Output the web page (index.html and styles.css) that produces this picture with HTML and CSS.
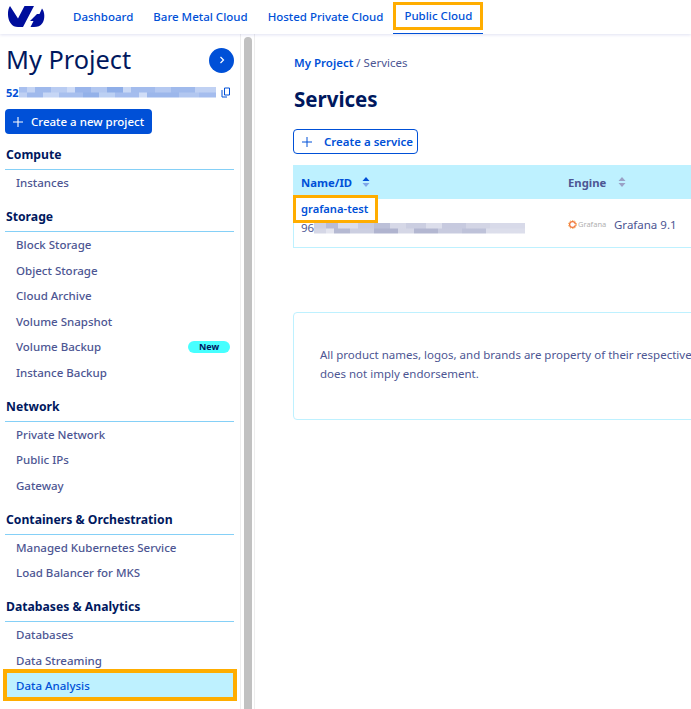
FILE: index.html
```html
<!DOCTYPE html>
<html lang="en">
<head>
<meta charset="utf-8">
<title>Services</title>
<link rel="stylesheet" href="styles.css">
</head>
<body>
<header class="topbar">
  <svg class="logo" width="38" height="24" viewBox="0 0 38 24" aria-label="OVH"><path fill="#000e9c" d="M3 2C0 6 .5 15 3.500 19C5.500 22 8 23 11 23H16L27 2H17.500L11 14.500Z"/><path fill="#000e9c" d="M35 4.500C38 8 38 15.500 35.500 19C33.500 22 30.500 23 27 23H23.500L26.500 17H23L30 10H32.500Z"/></svg>
  <nav class="tabs">
    <a class="tab">Dashboard</a>
    <a class="tab">Bare Metal Cloud</a>
    <a class="tab">Hosted Private Cloud</a>
    <a class="tab tab-active"><span class="tab-mark">Public Cloud</span></a>
  </nav>
</header>
<div class="shell">
  <aside class="sidebar">
    <div class="project-row">
      <h2 class="project-title">My Project</h2>
      <span class="round-btn"><svg width="8" height="10" viewBox="0 0 8 10"><path d="M2.500 2L5.500 5L2.500 8" fill="none" stroke="#fff" stroke-width="1.200"/></svg></span>
    </div>
    <div class="id-row">
      <span class="id-prefix">52</span><span class="blur blur-blue"></span>
      <svg class="copy" width="10" height="11" viewBox="0 0 10 11"><path d="M3.500 1H8.500V8H3.500Z M1 3V10H6" fill="none" stroke="#0050d7" stroke-width="1"/></svg>
    </div>
    <a class="primary-btn"><svg width="12" height="12" viewBox="0 0 12 12"><path d="M6 1V11M1 6H11" stroke="#fff" stroke-width="1.100"/></svg><span>Create a new project</span></a>

    <section class="group group-first">
      <h3 class="group-title">Compute</h3>
      <a class="item">Instances</a>
    </section>
    <section class="group">
      <h3 class="group-title">Storage</h3>
      <a class="item">Block Storage</a>
      <a class="item">Object Storage</a>
      <a class="item">Cloud Archive</a>
      <a class="item">Volume Snapshot</a>
      <a class="item">Volume Backup<span class="badge">New</span></a>
      <a class="item">Instance Backup</a>
    </section>
    <section class="group">
      <h3 class="group-title">Network</h3>
      <a class="item">Private Network</a>
      <a class="item">Public IPs</a>
      <a class="item">Gateway</a>
    </section>
    <section class="group">
      <h3 class="group-title">Containers &amp; Orchestration</h3>
      <a class="item">Managed Kubernetes Service</a>
      <a class="item">Load Balancer for MKS</a>
    </section>
    <section class="group">
      <h3 class="group-title">Databases &amp; Analytics</h3>
      <a class="item">Databases</a>
      <a class="item">Data Streaming</a>
      <a class="item item-active">Data Analysis</a>
    </section>
  </aside>
  <div class="scrolltrack"><div class="scrollthumb"></div></div>
  <main class="content">
    <div class="crumbs"><a class="crumb-link">My Project</a> / Services</div>
    <h1 class="page-title">Services</h1>
    <a class="outline-btn"><svg width="12" height="12" viewBox="0 0 12 12"><path d="M6 1V11M1 6H11" stroke="#0050d7" stroke-width="1"/></svg><span>Create a service</span></a>
    <div class="table">
      <div class="thead">
        <div class="cell-name th th-sorted">Name/ID<svg class="sort" width="8" height="10" viewBox="0 0 8 10"><path d="M4 0L7.500 4H.5Z" fill="#0050d7"/><path d="M4 10L7.500 6H.5Z" fill="#7ea6e8"/></svg></div>
        <div class="cell-engine th">Engine<svg class="sort" width="8" height="10" viewBox="0 0 8 10"><path d="M4 0L7.500 4H.5Z" fill="#9aa1c6"/><path d="M4 10L7.500 6H.5Z" fill="#9aa1c6"/></svg></div>
      </div>
      <div class="tbody">
        <div class="cell-name">
          <a class="service-name"><span class="service-mark">grafana-test</span></a>
          <div class="service-id">96<span class="blur blur-grey"></span></div>
        </div>
        <div class="cell-engine engine-value">
          <span class="grafana-logo"><svg width="9" height="9" viewBox="0 0 10 10"><circle cx="5" cy="5" r="3.200" fill="none" stroke="#f0713a" stroke-width="1.400"/><circle cx="5" cy="5" r="4.400" fill="none" stroke="#f5a13c" stroke-width="1.100" stroke-dasharray="1.500 1.300"/><path d="M5 5.200H8.500" stroke="#fff" stroke-width="1"/></svg><span class="grafana-word">Grafana</span></span>
          <span>Grafana 9.1</span>
        </div>
      </div>
    </div>
    <div class="notice">
      <p class="notice-text">All product names, logos, and brands are property of their respective owners. Use of these names<br>does not imply endorsement.</p>
    </div>
  </main>
</div>
</body>
</html>
```
FILE: styles.css
```css
* { box-sizing: border-box; }
html, body { margin: 0; height: 100%; overflow: hidden; background: #fff; }
body { font-family: "Noto Sans", "Liberation Sans", sans-serif; font-size: 11.500px; color: #4d5693; width: 691px; height: 709px; }
a { text-decoration: none; }
h1, h2, h3, p { margin: 0; }

.topbar { height: 34px; display: flex; align-items: flex-start; box-shadow: 0 1px 3px rgba(0, 14, 156, .12); position: relative; z-index: 2; background: #fff; }
.logo { margin: 4px 0 0 7px; flex: none; }
.tabs { display: flex; margin-left: 18px; }
.tab { color: #0050d7; font-size: 11.500px; font-weight: 500; line-height: 34px; height: 34px; padding: 0 10px; white-space: nowrap; }
.tab-active { border-bottom: 1px solid #0050d7; padding: 2px 0 0; width: 90px; line-height: 1; }
.tab-mark { display: block; height: 28px; line-height: 22px; text-align: center; border: 3px solid #ffad00; }

.shell { display: flex; height: 675px; }
.sidebar { width: 241px; flex: none; border-right: 1px solid #eee; padding: 0 6px 0 5px; overflow: hidden; }
.project-row { display: flex; justify-content: space-between; align-items: center; height: 52px; }
.project-title { font-size: 25.300px; font-weight: 400; color: #00185e; line-height: 50px; padding: 0 0 2px 1px; }
.round-btn { width: 25px; height: 25px; border-radius: 50%; background: #0050d7; display: flex; align-items: center; justify-content: center; }
.id-row { display: flex; align-items: center; height: 12px; padding-left: 1px; }
.id-prefix { color: #0050d7; font-weight: 700; font-size: 11px; }
.blur { display: inline-block; height: 11px; flex: none; }
.blur-blue { width: 197px; background:
  linear-gradient(90deg, #a9c0ef 0 8px, #c4d4f4 8px 16px, #9fb9ec 16px 32px, #b9ccf2 32px 48px, #cfdcf7 48px 56px, #9ab5eb 56px 72px, #b2c7f0 72px 88px, #8faee8 88px 104px, #c9d8f5 104px 112px, #a3bced 112px 136px, #b5c9f1 136px 152px, #a0baec 152px 176px, #c0d1f3 176px 197px) top / 100% 50% no-repeat,
  linear-gradient(90deg, #bfd0f3 0 8px, #9fb9ec 8px 24px, #c6d6f5 24px 40px, #a7bfee 40px 64px, #93b1e9 64px 80px, #bcd0f3 80px 96px, #a5bdee 96px 120px, #d0ddf7 120px 128px, #9cb7eb 128px 160px, #b2c7f0 160px 180px, #a5bdee 180px 197px) bottom / 100% 50% no-repeat; }
.blur-grey { width: 211px; background:
  linear-gradient(90deg, #cfd1e3 0 12px, #b9bcd6 12px 24px, #dcdeeb 24px 44px, #c9cce0 44px 60px, #bcc0d8 60px 76px, #d6d8e7 76px 92px, #cbcee1 92px 112px, #dcdeeb 112px 128px, #c7cadf 128px 152px, #d3d5e5 152px 176px, #d8dae9 176px 211px) top / 100% 50% no-repeat,
  linear-gradient(90deg, #d5d7e6 0 12px, #e4e5ef 12px 20px, #b5b9d2 20px 36px, #cccfe1 36px 60px, #b0b4cf 60px 84px, #d5d7e6 84px 100px, #b3b7d1 100px 124px, #c8cbdf 124px 148px, #bec2d9 148px 172px, #dcdeeb 172px 211px) bottom / 100% 50% no-repeat; }
.copy { margin-left: 5px; }
.primary-btn { display: flex; align-items: center; gap: 7px; width: 147px; height: 25px; margin-top: 11px; padding-left: 7px; background: #0050d7; color: #fff; border-radius: 4px; font-size: 11.500px; font-weight: 500; white-space: nowrap; }

.group { margin-top: 12.200px; }
.group-first { margin-top: 12px; }
.group-title { font-size: 12.200px; font-weight: 700; color: #00185e; line-height: 18px; padding: 0 0 5px 1px; border-bottom: 1px solid #85d0f7; white-space: nowrap; }
.item { display: flex; align-items: center; justify-content: space-between; height: 25.600px; padding: 0 4px 0 11px; font-size: 11.500px; font-weight: 500; color: #4d5693; white-space: nowrap; }
.item-active { background: #bef1ff; color: #0050d7; height: 26px; margin: -1px 0 0 1px; padding-left: 10px; outline: 4px solid #ffad00; outline-offset: -1px; }
.badge { width: 42px; height: 12px; border-radius: 6px; background: #47ffff; color: #00185e; font-size: 9px; font-weight: 700; line-height: 12px; text-align: center; }

.scrolltrack { width: 14px; flex: none; border-right: 1px solid #eee; padding: 3px 2px 0 3px; }
.scrollthumb { width: 8px; height: 672px; border-radius: 4px 4px 0 0; background: #c1c1c1; }

.content { flex: none; width: 436px; padding: 0 0 0 39px; overflow: hidden; }
.crumbs { margin-top: 21px; line-height: 16px; font-size: 11.500px; color: #4d5693; white-space: nowrap; }
.crumb-link { color: #0050d7; font-weight: 600; }
.page-title { font-size: 20.500px; font-weight: 700; color: #00185e; line-height: 30px; margin-top: 13px; }
.outline-btn { display: flex; align-items: center; width: 125px; height: 25px; margin: 15px 0 0 -1px; padding-left: 7px; border: 1px solid #0050d7; border-radius: 4px; color: #0050d7; font-size: 11.500px; font-weight: 600; white-space: nowrap; }
.outline-btn span { margin-left: 11px; }
.table { width: 500px; margin: 11px 0 0 -1px; }
.thead { display: flex; height: 34px; background: #bef1ff; align-items: center; }
.th { font-size: 11.300px; font-weight: 700; color: #4d5693; display: flex; align-items: center; gap: 12px; }
.th-sorted { color: #0050d7; gap: 10px; }
.cell-name { width: 267px; padding-left: 8px; flex: none; }
.cell-engine { padding-left: 8px; flex: none; }
.tbody { display: flex; height: 49px; border: 1px solid #bef1ff; border-top: 0; border-right: 0; }
.tbody .cell-name { padding-left: 0; width: 266px; }
.service-name { display: block; height: 24px; margin-top: -4px; }
.service-mark { display: inline-block; height: 28px; width: 85px; margin-left: -1px; line-height: 22px; padding: 0 5px; border: 3px solid #ffad00; background: #fff; color: #0050d7; font-weight: 600; font-size: 11.200px; white-space: nowrap; }
.service-id { display: flex; align-items: center; padding-left: 7px; margin-top: 2px; line-height: 14px; font-size: 11.500px; white-space: nowrap; }
.engine-value { display: flex; align-items: center; gap: 7px; height: 32px; margin-top: 9px; font-size: 11.500px; color: #4d5693; white-space: nowrap; }
.grafana-logo { display: flex; align-items: center; gap: 1px; width: 39px; }
.grafana-word { color: #b0b0b0; font-size: 7.500px; font-weight: 400; }
.notice { width: 500px; height: 108px; margin: 64px 0 0 -1px; border: 1px solid #bef1ff; border-radius: 4px; padding: 32px 26px; }
.notice-text { font-size: 11.500px; line-height: 19px; color: #4d5693; white-space: nowrap; }
```
